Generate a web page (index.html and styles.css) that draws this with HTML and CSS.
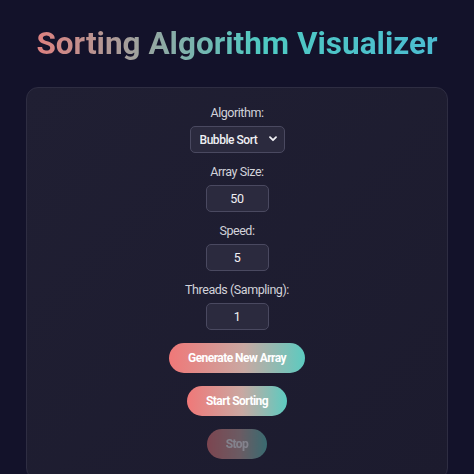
FILE: index.html
```html
<!DOCTYPE html>
<html lang="en">
<head>
    <meta charset="UTF-8">
    <meta name="viewport" content="width=device-width, initial-scale=1.0">
    <title>Sorting Algorithm Visualizer</title>
    <link rel="stylesheet" href="styles.css">
</head>
<body>
    <h1 class="title">Sorting Algorithm Visualizer</h1>
    <main class="panel">
        <label class="field-label" for="algorithm">Algorithm:</label>
        <div class="select-wrap">
            <select id="algorithm" class="field select">
                <option>Bubble Sort</option>
                <option>Selection Sort</option>
                <option>Insertion Sort</option>
                <option>Merge Sort</option>
                <option>Quick Sort</option>
            </select>
            <!-- dropdown chevron -->
            <svg class="chevron" width="8" height="6" viewBox="0 0 8 6">
                <path d="M1 1.2 L4 4.2 L7 1.2" fill="none" stroke="#f0f0f4" stroke-width="1.8" stroke-linecap="round" stroke-linejoin="round"/>
            </svg>
        </div>

        <label class="field-label" for="arraySize">Array Size:</label>
        <input type="number" id="arraySize" class="field number" value="50">

        <label class="field-label" for="speed">Speed:</label>
        <input type="number" id="speed" class="field number" value="5">

        <label class="field-label" for="threads">Threads (Sampling):</label>
        <input type="number" id="threads" class="field number" value="1">

        <div class="actions">
            <button class="btn">Generate New Array</button>
            <button class="btn">Start Sorting</button>
            <button class="btn" disabled>Stop</button>
        </div>
    </main>
</body>
</html>
```

FILE: styles.css
```css
body {
    font-family: Roboto, "Liberation Sans", sans-serif;
    margin: 0;
    padding: 0;
    background-color: #13122a;
    color: #d0d0d8;
    height: 474px;
    overflow: hidden;
}
.title {
    margin: 25px 0 24px;
    text-align: center;
    font-size: 31.5px;
    font-weight: 700;
    line-height: 38px;
    background: linear-gradient(90deg, #f67575 0%, #4fcac2 55%, #4bb9d4 100%);
    -webkit-background-clip: text;
    background-clip: text;
    color: transparent;
}
.panel {
    margin: 0 26px;
    padding: 16px 0 20px;
    background: linear-gradient(135deg, #201f33, #1c1b2e);
    border: 1px solid #2e2d42;
    border-radius: 12px;
    display: flex;
    flex-direction: column;
    align-items: center;
}
.field-label {
    font-size: 12.5px;
    letter-spacing: -0.45px;
    line-height: 17px;
    margin-bottom: 5px;
    color: #d2d2d9;
}
.field {
    box-sizing: border-box;
    height: 27px;
    margin-bottom: 10px;
    background-color: #2b2a3e;
    border: 1px solid #4a4960;
    border-radius: 5px;
    color: #f0f0f4;
    font-family: inherit;
    font-size: 12.5px;
    letter-spacing: -0.3px;
}
.select-wrap {
    position: relative;
}
.select {
    width: 95px;
    padding: 0 0 0 9px;
    -webkit-appearance: none;
    appearance: none;
    font-size: 12px;
    font-weight: 500;
    letter-spacing: -0.45px;
}
.chevron {
    position: absolute;
    right: 8px;
    top: 10px;
    pointer-events: none;
}
.number {
    width: 63px;
    text-align: center;
    -moz-appearance: textfield;
}
.number::-webkit-inner-spin-button,
.number::-webkit-outer-spin-button {
    -webkit-appearance: none;
    margin: 0;
}
.actions {
    margin-top: 3px;
    display: flex;
    flex-direction: column;
    align-items: center;
    gap: 13px;
}
.btn {
    height: 30px;
    padding: 0 19px;
    border: none;
    border-radius: 15px;
    background: linear-gradient(90deg, #f07878, #c9a8a2 55%, #5ccbc0);
    color: #fff;
    font-family: inherit;
    font-size: 12px;
    letter-spacing: -0.55px;
    font-weight: 700;
    cursor: pointer;
}
.btn:disabled {
    opacity: 0.45;
    cursor: default;
}
```
